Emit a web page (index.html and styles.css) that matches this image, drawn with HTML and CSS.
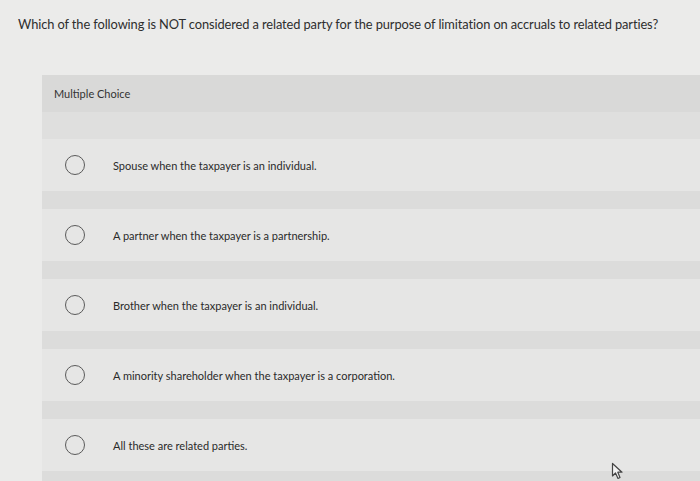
FILE: index.html
```html
<!DOCTYPE html>
<html>
<head>
<meta charset="utf-8">
<link rel="stylesheet" href="styles.css">
</head>
<body>
<div class="page">
  <p class="question">Which of the following is NOT considered a related party for the purpose of limitation on accruals to related parties?</p>
  <div class="card">
    <div class="card-head">Multiple Choice</div>
    <div class="gap"></div>
    <div class="option"><span class="radio"></span><span class="label">Spouse when the taxpayer is an individual.</span></div>
    <div class="sep"></div>
    <div class="option"><span class="radio"></span><span class="label">A partner when the taxpayer is a partnership.</span></div>
    <div class="sep"></div>
    <div class="option"><span class="radio"></span><span class="label">Brother when the taxpayer is an individual.</span></div>
    <div class="sep"></div>
    <div class="option"><span class="radio"></span><span class="label">A minority shareholder when the taxpayer is a corporation.</span></div>
    <div class="sep"></div>
    <div class="option"><span class="radio"></span><span class="label">All these are related parties.</span></div>
    <div class="sep"></div>
  </div>
  <svg class="cursor" width="14" height="18" viewBox="0 0 14 18"><path d="M1.5 1.5 L1.5 14 L4.5 11 L7 16.5 L9 15.5 L6.8 10.2 L11 10.2 Z" fill="#f2f2f2" stroke="#444" stroke-width="1.2" stroke-linejoin="round"/></svg>
</div>
</body>
</html>
```
FILE: styles.css
```css
html, body {
  margin: 0;
  padding: 0;
  background: #ebebea;
}
.page {
  position: relative;
  width: 700px;
  height: 481px;
  overflow: hidden;
  font-family: Lato, "Open Sans", sans-serif;
  color: #2e2e2e;
}
.question {
  margin: 0;
  padding: 16px 0 0 18px;
  height: 60px;
  box-sizing: border-box;
  font-size: 12.85px;
  letter-spacing: -0.1px;
}
.card {
  margin: 15px 0 0 42px;
  background: #e5e5e4;
  display: flex;
  flex-direction: column;
}
.card-head {
  height: 37px;
  background: #d9d9d8;
  display: flex;
  align-items: center;
  padding-left: 12px;
  font-size: 11px;
  color: #333;
}
.gap {
  height: 27px;
  background: #dfdfde;
}
.option {
  height: 52px;
  display: flex;
  align-items: center;
  padding-left: 23px;
  background: #e6e6e5;
}
.sep {
  height: 18px;
  background: #dcdcdb;
}
.radio {
  width: 20px;
  height: 20px;
  box-sizing: border-box;
  border: 1.6px solid #5a5a5a;
  border-radius: 50%;
  flex: none;
}
.label {
  margin-left: 28px;
  font-size: 11px;
  color: #2a2a2a;
}
.cursor {
  position: absolute;
  left: 611px;
  top: 462px;
}
```
